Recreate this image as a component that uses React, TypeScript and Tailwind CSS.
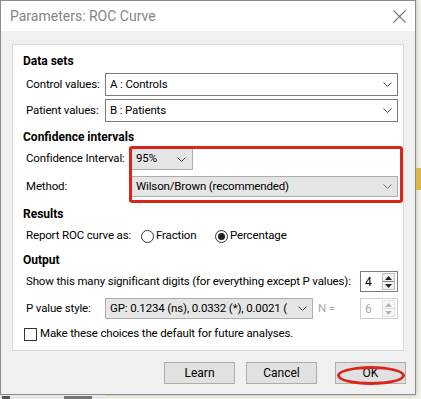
import React from "react";

const font = { fontFamily: 'Roboto, "Noto Sans", sans-serif' };

function Chevron({ color = "#444" }: { color?: string }) {
  return (
    <svg width="9" height="5" viewBox="0 0 9 5" className="shrink-0">
      <polyline points="0.5,0.5 4.5,4.5 8.5,0.5" fill="none" stroke={color} strokeWidth="1" />
    </svg>
  );
}

function Spin({ value, disabled }: { value: string; disabled?: boolean }) {
  const c = disabled ? "#b5b5b5" : "#222";
  return (
    <div
      className={`w-[38px] h-[21px] flex items-center bg-white border ${disabled ? "border-[#cfcfcf]" : "border-[#7a7a7a]"}`}
    >
      <span className={`pl-[4px] flex-1 text-[12px] ${disabled ? "text-[#a8a8a8]" : "text-black"}`}>{value}</span>
      <div className={`w-[13px] h-[17px] mr-[2px] flex flex-col border ${disabled ? "border-[#e0e0e0] bg-[#f7f7f7]" : "border-[#bdbdbd] bg-[#f0f0f0]"}`}>
        <div className="flex-1 flex items-center justify-center">
          <svg width="7" height="4" viewBox="0 0 7 4"><polygon points="0,4 3.5,0 7,4" fill={c} /></svg>
        </div>
        <div className={`h-px ${disabled ? "bg-[#dcdcdc]" : "bg-[#888]"}`} />
        <div className="flex-1 flex items-center justify-center">
          <svg width="7" height="4" viewBox="0 0 7 4"><polygon points="0,0 3.5,4 7,0" fill={c} /></svg>
        </div>
      </div>
    </div>
  );
}

export default function App() {
  return (
    <div className="relative w-[421px] h-[399px] overflow-hidden bg-[#f4f2e6] text-black" style={font}>
      {/* background fragments */}
      <div className="absolute right-0 top-[168px] w-[5px] h-[22px] bg-[#d9b64a]" />
      <div className="absolute left-0 bottom-0 w-[105px] h-[4px] bg-[#e6e6e6]" />
      <div className="absolute left-[2px] bottom-0 w-[8px] h-[3px] bg-[#555]" />
      <div className="absolute left-[64px] bottom-0 w-[28px] h-[3px] bg-[#777]" />

      {/* window */}
      <div className="w-[416px] h-[395px] flex flex-col border border-[#8c8c8c] bg-[#f0f0f0] shadow-[0_0_4px_rgba(0,0,0,0.25)]">
        {/* title bar */}
        <div className="h-[30px] bg-white flex items-center justify-between pl-[9px] pr-[6px] shrink-0">
          <span className="text-[14px] text-[#858585]">Parameters: ROC Curve</span>
          <svg width="13" height="13" viewBox="0 0 13 13" className="mr-[3px]">
            <path d="M0.5 0.5 L12.5 12.5 M12.5 0.5 L0.5 12.5" stroke="#777" strokeWidth="1.1" />
          </svg>
        </div>

        {/* body */}
        <div className="flex-1 flex flex-col px-[11px] pt-[13px]">
          {/* white panel */}
          <div className="relative h-[307px] bg-white border border-[#dadada] flex flex-col pl-[10px] pr-[5px] pt-[5px] text-[11.5px] tracking-[-0.15px] whitespace-nowrap">
            <div className="h-[18px] pt-[3px] flex items-center font-bold text-[12px] tracking-normal">Data sets</div>

            <div className="mt-[5px] h-[23px] flex items-center">
              <span className="w-[82px] pl-[3px]">Control values:</span>
              <div className="flex-1 h-full flex items-center justify-between border border-[#7a7a7a] bg-white pl-[4px] pr-[5px]">
                <span>A : Controls</span>
                <Chevron />
              </div>
            </div>
            <div className="mt-[3px] h-[23px] flex items-center">
              <span className="w-[82px] pl-[3px]">Patient values:</span>
              <div className="flex-1 h-full flex items-center justify-between border border-[#7a7a7a] bg-white pl-[4px] pr-[5px]">
                <span>B : Patients</span>
                <Chevron />
              </div>
            </div>

            <div className="mt-[4px] h-[18px] pt-[3px] flex items-center font-bold text-[12px] tracking-normal">Confidence intervals</div>

            <div className="mt-[4px] h-[22px] flex items-center">
              <span className="w-[108px] pl-[3px]">Confidence Interval:</span>
              <div className="w-[62px] h-full flex items-center justify-between border border-[#adadad] bg-[#e5e5e5] pl-[4px] pr-[6px]">
                <span>95%</span>
                <Chevron />
              </div>
            </div>
            <div className="mt-[6px] h-[21px] flex items-center">
              <span className="w-[108px] pl-[3px]">Method:</span>
              <div className="flex-1 h-full flex items-center justify-between border border-[#adadad] bg-[#e5e5e5] pl-[4px] pr-[5px]">
                <span>Wilson/Brown (recommended)</span>
                <Chevron color="#777" />
              </div>
            </div>

            <div className="mt-[6px] h-[18px] pt-[3px] flex items-center font-bold text-[12px] tracking-normal">Results</div>

            <div className="mt-[6px] h-[18px] flex items-center">
              <span className="w-[118px] pl-[3px]">Report ROC curve as:</span>
              <div className="w-[74px] flex items-center">
                <div className="w-[13px] h-[13px] rounded-full border border-[#333] bg-white" />
                <span className="ml-[2px]">Fraction</span>
              </div>
              <div className="flex items-center">
                <div className="w-[13px] h-[13px] rounded-full border border-[#333] bg-white flex items-center justify-center">
                  <div className="w-[7px] h-[7px] rounded-full bg-[#222]" />
                </div>
                <span className="ml-[2px]">Percentage</span>
              </div>
            </div>

            <div className="mt-[4px] h-[18px] pt-[3px] flex items-center font-bold text-[12px] tracking-normal">Output</div>

            <div className="mt-[4px] h-[21px] flex items-center justify-between">
              <span className="pl-[3px]">Show this many significant digits (for everything except P values):</span>
              <Spin value="4" />
            </div>

            <div className="mt-[6px] h-[21px] flex items-center">
              <span className="w-[82px] pl-[3px]">P value style:</span>
              <div className="w-[208px] h-full flex items-center border border-[#adadad] bg-[#e5e5e5] pl-[4px] pr-[5px] overflow-hidden">
                <span className="flex-1 whitespace-nowrap overflow-hidden">GP: 0.1234 (ns), 0.0332 (*), 0.0021 (</span>
                <span className="pl-[4px]"><Chevron /></span>
              </div>
              <span className="ml-[5px] text-[#a8a8a8]">N =</span>
              <span className="flex-1" />
              <Spin value="6" disabled />
            </div>

            <div className="mt-[7px] h-[16px] flex items-center">
              <div className="w-[13px] h-[13px] border border-[#333] bg-white ml-[1px]" />
              <span className="ml-[3px]">Make these choices the default for future analyses.</span>
            </div>

            {/* red annotation box */}
            <div className="absolute left-[116px] top-[101px] w-[274px] h-[57px] border-[3px] border-[#d9261c] rounded-[3px] pointer-events-none" />
          </div>

          {/* buttons */}
          <div className="mt-[11px] flex justify-end mr-[-2px]">
            <div className="w-[71px] h-[22px] flex items-center justify-center bg-[#e1e1e1] border border-[#adadad] text-[12px]">Learn</div>
            <div className="ml-[11px] w-[71px] h-[22px] flex items-center justify-center bg-[#e1e1e1] border border-[#adadad] text-[12px]">Cancel</div>
            <div className="ml-[18px] relative w-[71px] h-[22px] flex items-center justify-center bg-[#e1e1e1] border border-[#adadad] text-[12px]">
              OK
              <div className="absolute left-[1px] top-[3px] w-[68px] h-[19px] rounded-[50%] border-[3px] border-[#d9261c]" />
            </div>
          </div>
        </div>
      </div>
    </div>
  );
}
